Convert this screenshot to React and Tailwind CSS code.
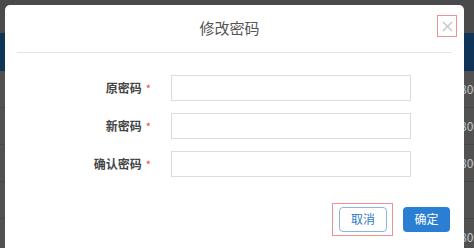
const fields = ["原密码", "新密码", "确认密码"];
const bgRows = ["800", "800", "800", "", "800"];

export default function App() {
  return (
    <div
      className="relative w-[474px] h-[248px] overflow-hidden bg-[#515151]"
      style={{ fontFamily: '"Noto Sans CJK SC", "Noto Sans", sans-serif' }}
    >
      {/* page behind the overlay */}
      <div className="flex flex-col">
        <div className="h-[33px] bg-[#4a4a4a]" />
        <div className="h-[38px] bg-[#0f3457]" />
        {bgRows.map((t, i) => (
          <div
            key={i}
            className="h-[37px] flex items-center border-b border-[#474747] pl-[460px] text-[12px] text-[#c4c4c4]"
          >
            {t}
          </div>
        ))}
      </div>

      {/* modal */}
      <div className="absolute left-[5px] top-[5px] w-[459px] h-[260px] bg-white rounded-t-[5px]">
        <div className="relative mx-[12px] h-[48px] flex items-center justify-center pr-[10px] border-b border-[#e5e5e5]">
          <span className="text-[15px] text-[#555]">修改密码</span>
          <button className="absolute right-[-5px] top-[10px] w-[20px] h-[22px] flex items-center justify-center border border-[#ee8f95]">
            <svg width="11" height="11" viewBox="0 0 11 11">
              <path d="M1 1 L10 10 M10 1 L1 10" stroke="#c4c4c4" strokeWidth="1.4" fill="none" />
            </svg>
          </button>
        </div>

        <div className="flex flex-col gap-[12px] pt-[22px]">
          {fields.map((f) => (
            <div key={f} className="flex items-center h-[26px]">
              <div className="w-[146px] flex justify-end items-center text-[12px] font-semibold text-[#444]">
                <span>{f}</span>
                <span className="ml-[4px] text-[#e5484d] font-normal text-[11px]">*</span>
              </div>
              <input className="ml-[20px] w-[240px] h-[26px] border border-[#dcdcdc] outline-none" />
            </div>
          ))}
        </div>

        <div className="flex justify-end items-center mt-[26px] pr-[14px]">
          <div className="border border-[#ee8f95] pl-[6px] pr-[5px] pt-[1px] pb-[3px]">
            <button className="w-[48px] h-[25px] rounded-[4px] border border-[#8db6de] text-[12px] text-[#2f78c4] bg-white">
              取消
            </button>
          </div>
          <button className="ml-[10px] w-[47px] h-[25px] rounded-[4px] bg-[#2b7fd3] text-[12px] text-white">
            确定
          </button>
        </div>
      </div>
    </div>
  );
}
